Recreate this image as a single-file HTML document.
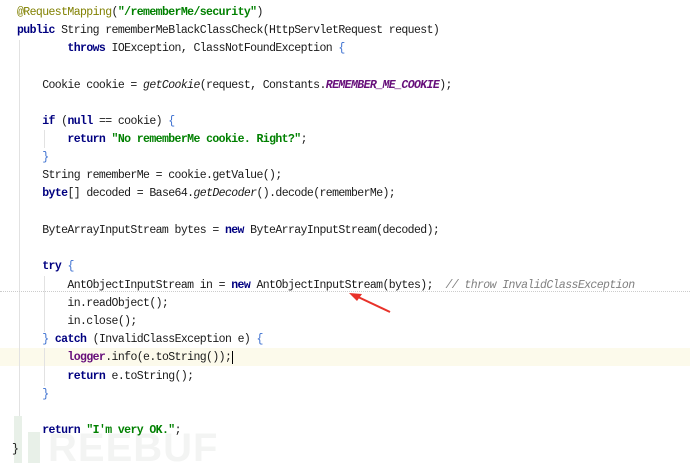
<!DOCTYPE html>
<html><head><style>
body{margin:0;width:690px;height:463px;background:#fff;overflow:hidden;position:relative;font-family:"Liberation Mono",monospace;}
.l{position:absolute;left:17px;white-space:pre;font-size:11.5px;letter-spacing:-0.6px;color:#1a1a1a;line-height:18px;height:18px;z-index:2}
.k{color:#000080;font-weight:bold}
.s{color:#008000;font-weight:bold}
.a{color:#808000}
.i{font-style:italic}
.p{color:#660e7a;font-style:italic;font-weight:bold}
.c{color:#808080;font-style:italic}
.b{color:#3b6fd0}
.g{position:absolute;width:1px;background:#e2e2e2}
</style></head><body>
<div style="position:absolute;left:0;top:348px;width:690px;height:18px;background:#fcfaeb"></div>
<div class="g" style="left:19px;top:40px;height:420px"></div>
<div class="g" style="left:44px;top:130px;height:18px"></div>
<div class="g" style="left:44px;top:276px;height:56px"></div>
<div class="g" style="left:44px;top:348px;height:38px"></div>
<div style="position:absolute;left:0;top:291px;width:690px;border-top:1px dotted #ccc"></div>
<div style="position:absolute;left:14px;top:416px;width:8px;height:47px;background:#e8f0e8"></div>
<div style="position:absolute;left:28px;top:432px;width:12px;height:31px;background:#e8f0e8"></div>
<div style="position:absolute;left:48px;top:426px;font:bold 40px 'Liberation Sans',sans-serif;color:#f3f4f3;letter-spacing:1px">REEBUF</div>
<div class="l" style="top:4px"><span class="a">@RequestMapping</span>(<span class="s">"/rememberMe/security"</span>)</div>
<div class="l" style="top:22px"><span class="k">public</span> String rememberMeBlackClassCheck(HttpServletRequest request)</div>
<div class="l" style="top:40px">        <span class="k">throws</span> IOException, ClassNotFoundException <span class="b">{</span></div>
<div class="l" style="top:77px">    Cookie cookie = <span class="i">getCookie</span>(request, Constants.<span class="p">REMEMBER_ME_COOKIE</span>);</div>
<div class="l" style="top:113px">    <span class="k">if</span> (<span class="k">null</span> == cookie) <span class="b">{</span></div>
<div class="l" style="top:131px">        <span class="k">return</span> <span class="s">"No rememberMe cookie. Right?"</span>;</div>
<div class="l" style="top:149px">    <span class="b">}</span></div>
<div class="l" style="top:167px">    String rememberMe = cookie.getValue();</div>
<div class="l" style="top:185px">    <span class="k">byte</span>[] decoded = Base64.<span class="i">getDecoder</span>().decode(rememberMe);</div>
<div class="l" style="top:222px">    ByteArrayInputStream bytes = <span class="k">new</span> ByteArrayInputStream(decoded);</div>
<div class="l" style="top:258px">    <span class="k">try</span> <span class="b">{</span></div>
<div class="l" style="top:277px">        AntObjectInputStream in = <span class="k">new</span> AntObjectInputStream(bytes);  <span class="c">// throw InvalidClassException</span></div>
<div class="l" style="top:295px">        in.readObject();</div>
<div class="l" style="top:313px">        in.close();</div>
<div class="l" style="top:331px">    <span class="b">}</span> <span class="k">catch</span> (InvalidClassException e) <span class="b">{</span></div>
<div class="l" style="top:349px">        <span style="color:#660e7a;font-weight:bold">logger</span>.info(e.toString());<span style="border-left:1px solid #000;margin-left:1px"></span></div>
<div class="l" style="top:368px">        <span class="k">return</span> e.toString();</div>
<div class="l" style="top:386px">    <span class="b">}</span></div>
<div class="l" style="top:422px">    <span class="k">return</span> <span class="s">"I'm very OK."</span>;</div>
<div class="l" style="top:441px;left:12px">}</div>
<svg style="position:absolute;left:0;top:0;z-index:3" width="690" height="463"><path d="M390 312 L356 296" stroke="#e8322a" stroke-width="2"/><path d="M349 293 L362 294 L357 301 Z" fill="#e8322a"/></svg>
</body></html>
